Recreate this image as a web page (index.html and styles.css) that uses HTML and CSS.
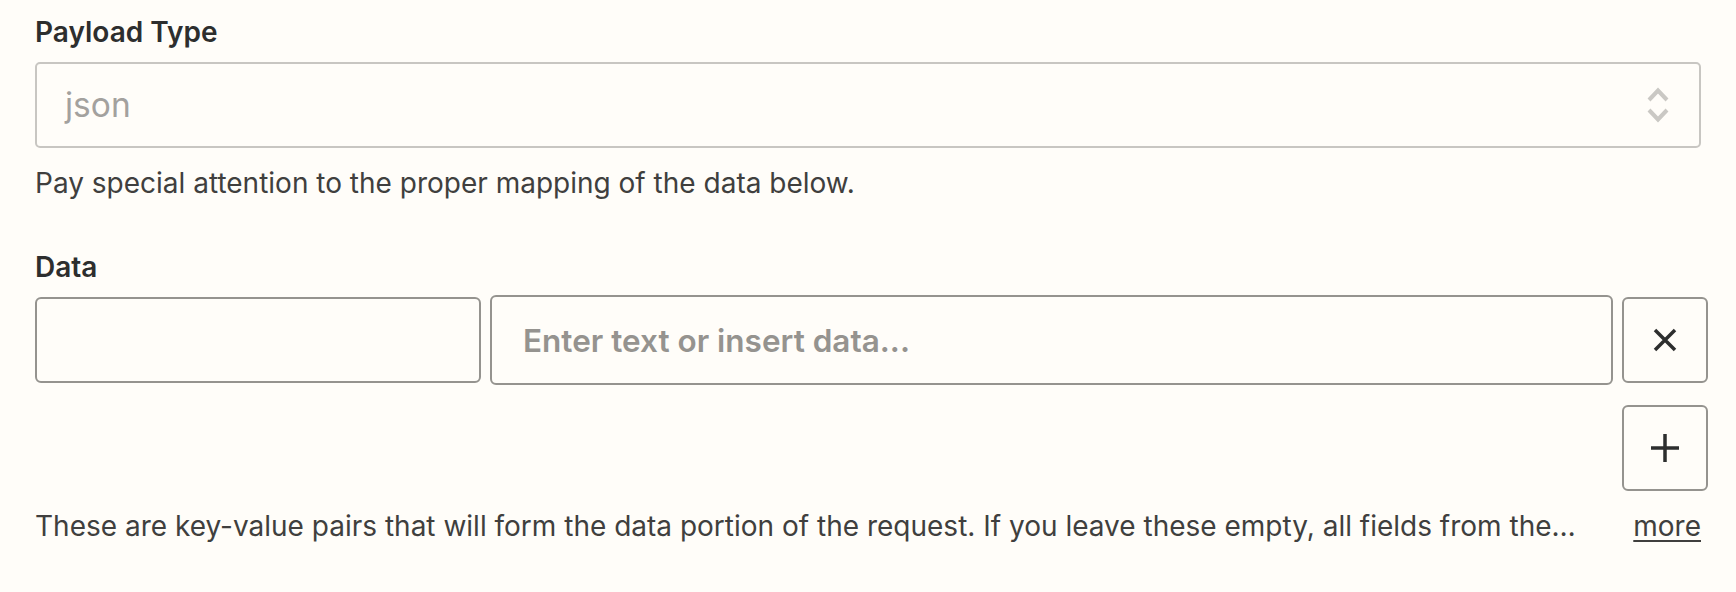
FILE: index.html
```html
<!DOCTYPE html>
<html lang="en">
<head>
    <meta charset="UTF-8">
    <meta name="viewport" content="width=device-width, initial-scale=1.0">
    <title>Webhook Data</title>
    <link rel="stylesheet" href="styles.css">
</head>
<body>
    <div class="form">
        <div class="field">
            <label class="field-label">Payload Type</label>
            <div class="select">
                <span class="select-value">json</span>
                <svg class="chevrons" width="24" height="36" viewBox="0 0 24 36">
                    <path d="M3 13 L12 3.5 L21 13" />
                    <path d="M3 23 L12 32.5 L21 23" />
                </svg>
            </div>
            <p class="help">Pay special attention to the proper mapping of the data below.</p>
        </div>

        <div class="field">
            <label class="field-label">Data</label>
            <div class="kv-row">
                <div class="input key"></div>
                <div class="input value"><span class="placeholder">Enter text or insert data...</span></div>
                <button class="icon-btn" title="Remove">
                    <svg width="24" height="24" viewBox="0 0 24 24">
                        <path d="M2 2 L22 22 M22 2 L2 22" />
                    </svg>
                </button>
            </div>
            <div class="add-row">
                <button class="icon-btn" title="Add">
                    <svg width="30" height="30" viewBox="0 0 30 30">
                        <path d="M15 1 V29 M1 15 H29" />
                    </svg>
                </button>
            </div>
            <div class="desc">
                <span class="desc-text">These are key-value pairs that will form the data portion of the request. If you leave these empty, all fields from the previous step will be used. If you want to send your own raw JSON or form-encoded values here, please use the Custom Request action instead.</span>
                <a href="#" class="more">more</a>
            </div>
        </div>
    </div>
</body>
</html>
```

FILE: styles.css
```css
body {
    margin: 0;
    background: #fffdf9;
    font-family: Inter, "Noto Sans", sans-serif;
    color: #403f3e;
}
.form {
    padding: 15px 35px 0 35px;
}
.field-label {
    display: block;
    font-size: 28px;
    line-height: 34px;
    font-weight: 600;
    color: #2d2e2e;
}
.select {
    display: flex;
    align-items: center;
    justify-content: space-between;
    height: 86px;
    box-sizing: border-box;
    margin-top: 13px;
    padding: 0 29px 0 28px;
    border: 2px solid #c8c6c2;
    border-radius: 5px;
}
.select-value {
    font-size: 33.5px;
    color: #a3a19e;
}
.chevrons path {
    fill: none;
    stroke: #cac8c4;
    stroke-width: 4;
}
.help {
    margin: 15px 0 47px 0;
    font-size: 28px;
    line-height: 40px;
}
.kv-row {
    display: flex;
    align-items: center;
    gap: 9px;
    margin-top: 11px;
    margin-right: -7px;
}
.input {
    box-sizing: border-box;
    height: 86px;
    border: 2px solid #95938f;
    border-radius: 6px;
}
.input.key {
    width: 446px;
}
.input.value {
    flex: 1;
    height: 90px;
    display: flex;
    align-items: center;
    padding-left: 31px;
}
.placeholder {
    font-size: 31.5px;
    font-weight: 600;
    color: #95938f;
}
.icon-btn {
    width: 86px;
    height: 86px;
    flex: none;
    display: flex;
    align-items: center;
    justify-content: center;
    padding: 0;
    background: transparent;
    border: 2px solid #95938f;
    border-radius: 6px;
    cursor: pointer;
}
.icon-btn path {
    fill: none;
    stroke: #2d2e2e;
    stroke-width: 3.5;
}
.add-row {
    display: flex;
    justify-content: flex-end;
    margin-top: 20px;
    margin-right: -7px;
}
.desc {
    display: flex;
    align-items: baseline;
    gap: 54px;
    margin-top: 15px;
    font-size: 28px;
    line-height: 40px;
}
.desc-text {
    flex: 1;
    min-width: 0;
    white-space: nowrap;
    overflow: hidden;
    text-overflow: ellipsis;
}
.more {
    color: #403f3e;
    text-decoration: underline;
    text-underline-offset: 4px;
}
```
